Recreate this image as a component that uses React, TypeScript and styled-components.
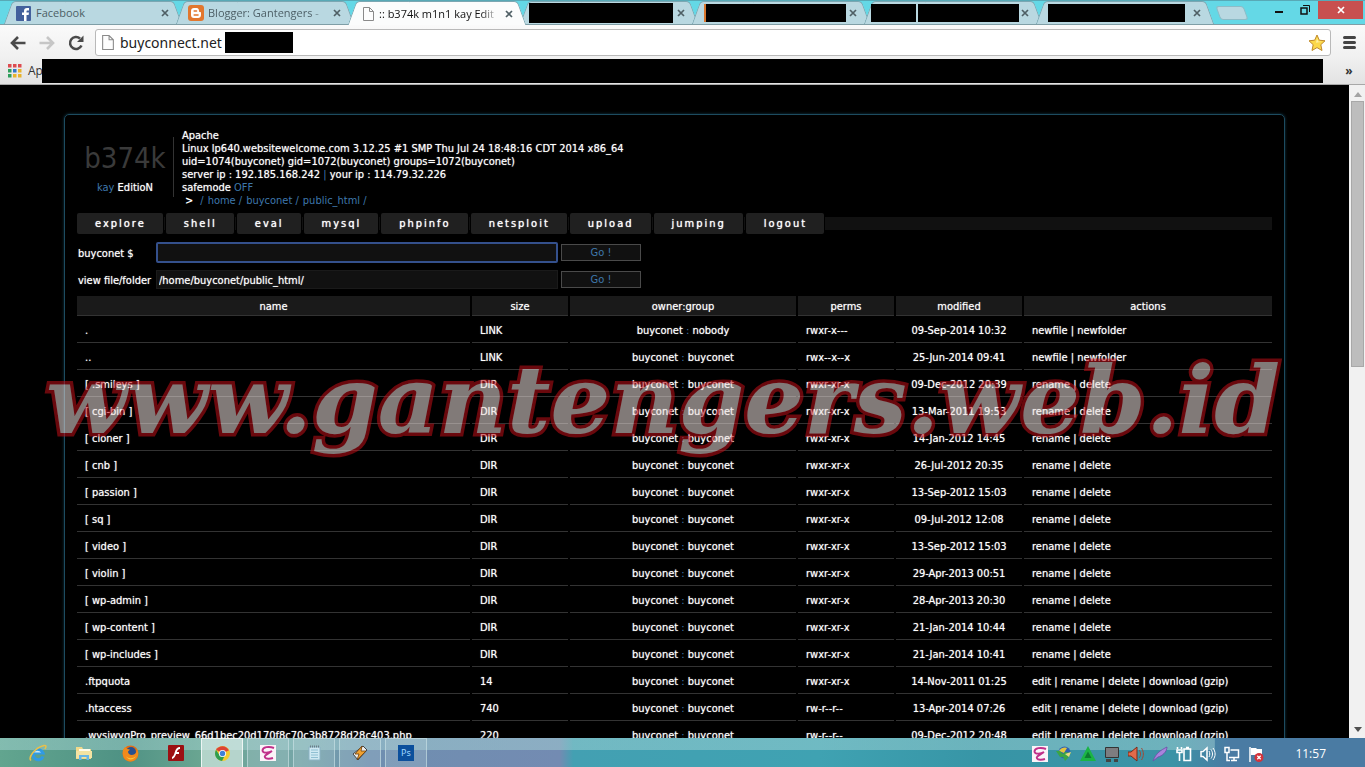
import React from "react";
import styled, { createGlobalStyle, css } from "styled-components";

const tahoma = `"DejaVu Sans Condensed", "Noto Sans", sans-serif`;
const segoe = `"Open Sans", "Noto Sans", sans-serif`;
const accent = "#3f78ac";

const GlobalStyle = createGlobalStyle`
  * { box-sizing: border-box; }
  body { margin: 0; background: #000; }
  a { color: inherit; text-decoration: none; }
  button { font: inherit; cursor: pointer; }
`;

const Screen = styled.div`
  display: flex;
  flex-direction: column;
  height: 100vh;
  overflow: hidden;
`;

/* ---------- browser chrome ---------- */

const TabStrip = styled.header`
  display: flex;
  flex: none;
  height: 25px;
  background: #64d8e6;
  border-top: 1px solid #58a9b6;
  border-bottom: 1px solid #7f9ea6;
  font: 11px/16px ${segoe};
`;

const Tab = styled.div<{ $active?: boolean; $indent?: number; $gap?: number }>`
  position: relative;
  display: flex;
  align-items: center;
  flex: 0 0 172px;
  min-width: 0;
  height: ${(p) => (p.$active ? 24 : 23)}px;
  padding: 1px 3px 0 ${(p) => p.$indent ?? 16}px;
  gap: ${(p) => p.$gap ?? 5}px;
  z-index: ${(p) => (p.$active ? 2 : 1)};
  color: ${(p) => (p.$active ? "#111" : "#4d5f66")};

  &::before,
  &::after {
    content: "";
    position: absolute;
    z-index: -1;
    top: 0;
    bottom: 0;
    background: ${(p) => (p.$active ? "#fbfcfc" : "#b9d8e1")};
    border: 0 solid #7ba7b2;
    border-top-width: 1px;
  }
  &::before {
    left: 8px;
    right: 50%;
    border-left-width: 1px;
    border-top-left-radius: 4px;
    transform: skewX(-20deg);
  }
  &::after {
    left: 40%;
    right: -6px;
    border-right-width: 1px;
    border-top-right-radius: 4px;
    transform: skewX(20deg);
  }
`;

const TabTitle = styled.span<{ $fade?: boolean }>`
  overflow: hidden;
  white-space: nowrap;
  flex: 0 1 120px;
  ${(p) =>
    p.$fade &&
    css`
      mask-image: linear-gradient(to right, #000 85%, transparent);
    `}
`;

const TabClose = styled.button`
  display: flex;
  flex: none;
  margin-left: auto;
  padding: 0;
  border: 0;
  background: none;
  color: #4f5f65;
`;

const Redaction = styled.span<{ $w: number; $h?: number; $edge?: string }>`
  flex: 0 0 ${(p) => p.$w}px;
  height: ${(p) => p.$h ?? 18}px;
  background: #000;
  ${(p) => p.$edge && `border-left: 2px solid ${p.$edge};`}
`;

const NewTab = styled.button`
  width: 28px;
  height: 14px;
  margin: 5px 0 0 14px;
  padding: 0;
  border: 1px solid #8dbcc7;
  border-radius: 3px;
  background: #b9d8e1;
  transform: skewX(20deg);
`;

const WindowControls = styled.div`
  display: flex;
  margin-left: auto;
  margin-right: 2px;
`;

const WindowButton = styled.button<{ $close?: boolean }>`
  display: flex;
  align-items: center;
  justify-content: center;
  width: ${(p) => (p.$close ? 45 : 26)}px;
  height: 18px;
  padding: 0;
  border: 0;
  color: ${(p) => (p.$close ? "#fff" : "#111")};
  background: ${(p) => (p.$close ? "#c8504f" : "transparent")};
`;

const Toolbar = styled.div`
  display: flex;
  align-items: center;
  flex: none;
  height: 33px;
  padding: 2px 9px 0 8px;
  background: linear-gradient(#fafafa, #f0f0f0);
`;

const ToolButton = styled.button`
  display: flex;
  justify-content: center;
  flex: 0 0 20px;
  margin-right: 9px;
  padding: 0;
  border: 0;
  background: none;
`;

const Omnibox = styled.div`
  display: flex;
  align-items: center;
  flex: 1;
  height: 27px;
  margin-right: 12px;
  padding: 0 4px 0 6px;
  border: 1px solid #b9b9b9;
  border-radius: 3px;
  background: #fff;
`;

const AddressInput = styled.input`
  width: 105px;
  margin-left: 6px;
  padding: 0;
  border: 0;
  outline: 0;
  background: none;
  color: #222;
  font: 14px/22px "Noto Sans", sans-serif;
`;

const PlainButton = styled.button`
  display: flex;
  margin-left: auto;
  padding: 0;
  border: 0;
  background: none;
`;

const BookmarksBar = styled.div`
  display: flex;
  align-items: center;
  flex: none;
  height: 27px;
  padding: 0 12px 0 8px;
  border-bottom: 1px solid #a8a8a8;
  background: linear-gradient(#f0f0f0, #e3e3e3);
  color: #333;
  font: 12px/16px ${segoe};
`;

const AppsLink = styled.a`
  display: flex;
  align-items: center;
  gap: 6px;
  width: 34px;
  overflow: hidden;

  svg {
    flex: none;
  }
`;

const HiddenBookmarks = styled.div`
  flex: 1;
  height: 24px;
  margin-right: 22px;
  background: #000;
`;

const Overflow = styled.button`
  width: 8px;
  padding: 0;
  border: 0;
  background: none;
  color: #333;
  font-weight: bold;
`;

/* ---------- page ---------- */

const Viewport = styled.div`
  position: relative;
  display: flex;
  flex: 1;
  min-height: 0;
  overflow: hidden;
  background: #000;
`;

const Page = styled.main`
  flex: 1;
  min-width: 0;
  padding: 29px 64px 0;
  color: #fff;
  font: 11px/13px ${tahoma};
  text-shadow: 0 0 1px rgba(255, 255, 255, 0.7);
`;

const Panel = styled.section`
  padding: 14px 12px 30px;
  border: 1px solid #1d4c60;
  border-radius: 5px;
  box-shadow: 0 0 3px #12394a;
`;

const Head = styled.div`
  display: flex;
  margin-bottom: 6px;
`;

const Brand = styled.div`
  width: 97px;
  height: 60px;
  margin-top: 8px;
  padding-top: 2px;
  border-right: 1px solid #333;
  text-align: center;
`;

const BrandName = styled.h1`
  margin: 0 0 4px;
  color: #3a3a3a;
  font: 29px/38px ${tahoma};
  text-shadow: none;
`;

const Accent = styled.span`
  color: ${accent};
  text-shadow: none;
`;

const Info = styled.div`
  padding-left: 8px;
`;

const Crumbs = styled.nav`
  display: flex;
  gap: 4px;
  padding-left: 3px;
  color: ${accent};
  text-shadow: none;
`;

const Prompt = styled.b`
  margin-right: 3px;
  color: #fff;
`;

const Menu = styled.nav`
  display: flex;
  gap: 3px;
  height: 21px;
  background: linear-gradient(#111, #111) 0 4px / 100% 13px no-repeat;
`;

const MenuItem = styled.a`
  padding: 0 17px 0 18px;
  background: #202020;
  border-radius: 2px;
  box-shadow: 0 0 0 1px #000;
  line-height: 22px;
  letter-spacing: 2px;
  text-shadow: 0 0 1px #fff;
`;

const CommandForm = styled.form`
  display: flex;
  align-items: center;
  height: 21px;
  margin-top: 8px;
  & + & {
    margin-top: 6px;
  }
`;

const CommandLabel = styled.label`
  flex: 0 0 79px;
  padding: 1px 0 0 1px;
`;

const CommandInput = styled.input<{ $focused?: boolean }>`
  flex: 0 0 402px;
  height: ${(p) => (p.$focused ? 21 : 19)}px;
  margin-right: 3px;
  padding: 1px 2px 0;
  border: ${(p) => (p.$focused ? "2px solid #34508c" : "1px solid #1a1a1a")};
  border-radius: ${(p) => (p.$focused ? 2 : 0)}px;
  outline: 0;
  background: #111;
  color: #fff;
  font: inherit;
  text-shadow: inherit;
`;

const GoButton = styled.button`
  width: 80px;
  height: 17px;
  padding: 0;
  border: 1px solid #4a4a4a;
  background: #111;
  color: ${accent};
  line-height: 15px;
`;

const TableFrame = styled.div`
  margin: 5px -2px 0;
`;

const Files = styled.table`
  width: 100%;
  border-spacing: 2px 1px;
  table-layout: fixed;
`;

const Col = styled.col<{ $w?: number }>`
  ${(p) => p.$w && `width: ${p.$w}px;`}
`;

const HeadCell = styled.th`
  height: 20px;
  padding: 1px 0 0;
  border-bottom: 1px solid #333;
  background: #1a1a1a;
  font-weight: normal;
`;

const Cell = styled.td<{ $center?: boolean }>`
  height: 26px;
  padding: 2px 8px 0;
  border-bottom: 1px solid #333;
  text-align: ${(p) => (p.$center ? "center" : "left")};
  white-space: nowrap;
`;

const Watermark = styled.div`
  position: absolute;
  top: 255px;
  left: 46px;
  color: #ebdedb;
  font: italic bold 94px/120px "DejaVu Serif", serif;
  white-space: nowrap;
  -webkit-text-stroke: 7px #c01018;
  paint-order: stroke fill;
  text-shadow: 0 0 3px #d01020;
  opacity: 0.55;
  pointer-events: none;
`;

const Scrollbar = styled.div`
  display: flex;
  flex-direction: column;
  align-items: center;
  flex: 0 0 16px;
  padding: 7px 0 6px 1px;
  background: #f1f1f1;
`;

const Thumb = styled.div`
  width: 13px;
  height: 266px;
  margin-top: 4px;
  border: 1px solid #a8a8a8;
  background: #bdbdbd;
`;

const Arrow = styled.span<{ $down?: boolean }>`
  border: 4px solid transparent;
  ${(p) =>
    p.$down
      ? css`
          margin-top: auto;
          border-top: 5px solid #505050;
          border-bottom-width: 0;
        `
      : css`
          border-bottom: 5px solid #a3a3a3;
          border-top-width: 0;
        `}
`;

/* ---------- taskbar ---------- */

const Taskbar = styled.footer`
  display: flex;
  align-items: stretch;
  flex: none;
  height: 29px;
  padding-left: 17px;
  background:
    linear-gradient(rgba(170, 215, 215, 0.45), rgba(170, 215, 215, 0.45)) 0 0 / 89% 12px no-repeat,
    linear-gradient(
      to right,
      #62a58f 0,
      #4f9284 9%,
      #6ba692 15%,
      #76a6a8 22%,
      #6f8fb0 27%,
      #738bb2 41%,
      #43a0b2 42%,
      #3fa2b2 60%,
      #3795a6 72%,
      #3c93a6 86%,
      #4a7ba3 90%,
      #4a7ba3 100%
    );
`;

const TaskButton = styled.button<{ $state?: "open" | "active" }>`
  display: flex;
  align-items: center;
  justify-content: center;
  flex: 0 0 42px;
  margin-right: 4px;
  padding: 0;
  border: 1px solid transparent;
  border-bottom: 0;
  background: none;
  ${(p) =>
    p.$state === "open" &&
    css`
      border-color: rgba(205, 228, 232, 0.6);
      background: rgba(190, 215, 220, 0.22);
    `}
  ${(p) =>
    p.$state === "active" &&
    css`
      border-color: #eef6f4;
      background: rgba(225, 240, 235, 0.62);
    `}
`;

const Tray = styled.div`
  display: flex;
  align-items: center;
  gap: 8px;
  margin-left: auto;
  padding-top: 2px;
`;

const Clock = styled.time`
  padding: 0 39px 0 23px;
  color: #fff;
  font: 12px/16px ${segoe};
`;

/* ---------- icons ---------- */

const CloseIcon = ({ width = 1.7 }: { width?: number }) => (
  <svg width="8" height="8" viewBox="0 0 8 8" stroke="currentColor" strokeWidth={width} fill="none">
    <path d="M1 1 7 7M7 1 1 7" />
  </svg>
);

const FacebookIcon = () => (
  <svg width="15" height="15" viewBox="0 0 15 15">
    <rect width="15" height="15" rx="1" fill="#43609c" />
    <path d="M8 15V9H6V6.500h2V5c0-2 1-3 3-3h2v2.500h-1.500c-.7 0-1 .3-1 1v1H13L12.600 9h-2.100v6z" fill="#fff" />
  </svg>
);

const BloggerIcon = () => (
  <svg width="16" height="16" viewBox="0 0 16 16">
    <rect width="16" height="16" rx="3" fill="#e2772e" />
    <path d="M6 3h2.500C10.500 3 11 4.500 11 6c0 .8.300 1 1 1s1 .3 1 1v2c0 2-1.300 3-3 3H6c-2 0-3-1.200-3-3V6c0-2 1.200-3 3-3z" fill="#fff" />
    <path d="M6.200 6h2.300M6.200 10h3.800" stroke="#e2772e" strokeWidth="1.600" strokeLinecap="round" />
  </svg>
);

const PageIcon = ({ h = 14 }: { h?: number }) => (
  <svg width={h - 3} height={h} viewBox="0 0 11 14" fill="#fdfdfd" stroke="#8a8a8a">
    <path d="M.5.500h6L10.500 4.500v9H.500zM6.500.500v4h4" />
  </svg>
);

const BackIcon = ({ color }: { color: string }) => (
  <svg width="16" height="14" viewBox="0 0 16 14" stroke={color} strokeWidth="2.600" fill="none">
    <path d="M2 7h13.500M8 1 2 7l6 6" />
  </svg>
);

const ForwardIcon = ({ color }: { color: string }) => (
  <svg width="16" height="14" viewBox="0 0 16 14" stroke={color} strokeWidth="2.600" fill="none">
    <path d="M14 7H.500M8 1l6 6-6 6" />
  </svg>
);

const ReloadIcon = () => (
  <svg width="16" height="16" viewBox="0 0 16 16">
    <path d="M13.500 10.500A6 6 0 1 1 12 3.500" stroke="#4a4a4a" strokeWidth="2.500" fill="none" />
    <path d="M15.500.500v6.500H9z" fill="#4a4a4a" />
  </svg>
);

const StarIcon = () => (
  <svg width="18" height="18" viewBox="0 0 18 18">
    <path d="m9 1 2.300 5.200 5.700.6-4.200 3.900 1.200 5.800L9 13.600 4 16.500l1.200-5.800L1 6.800l5.700-.6z" fill="#fbd84b" stroke="#c08a2a" strokeLinejoin="round" />
    <path d="m9 4 1.300 3.400 3.700.4-6 1z" fill="#fff0a0" />
  </svg>
);

const MenuIcon = () => (
  <svg width="13" height="13" viewBox="0 0 13 13" stroke="#444" strokeWidth="3" strokeLinecap="round">
    <path d="M1.500 1.500h10M1.500 6.500h10M1.500 11.500h10" />
  </svg>
);

const appColours = ["#dd4b50", "#dd4b50", "#dd4b50", "#2e9e5b", "#3277c8", "#e8b32c", "#2e9e5b", "#e8b32c", "#e8b32c"];
const AppsIcon = () => (
  <svg width="14" height="14" viewBox="0 0 14 14">
    {appColours.map((c, i) => (
      <rect key={i} x={(i % 3) * 5} y={Math.floor(i / 3) * 5} width="3.5" height="3.5" fill={c} />
    ))}
  </svg>
);

const ExplorerIcon = () => (
  <svg width="18" height="18" viewBox="0 0 18 18" fill="none">
    <path d="M14 12.500A5 5 0 1 1 14 9H5" stroke="#2f9be6" strokeWidth="3" />
    <path d="M5 8.500a4 3.500 0 0 1 7 0z" fill="#cfeaf8" />
    <path d="M2 16.500C-1 14 5 4 15 1.500c3-.6 2 2 .8 3.500" stroke="#e9c04a" strokeWidth="1.500" />
  </svg>
);
const FolderIcon = () => (
  <svg width="18" height="16" viewBox="0 0 18 16">
    <path d="M1 2h6l1 2h8v10H1z" fill="#f1d98a" />
    <path d="M4 4h11v4H4z" fill="#fffbe8" />
    <path d="M1 6h16v7H1z" fill="#f4e3a2" />
    <path d="M4 15v-5h10v5h-2.500v-3h-5v3z" fill="#68b7e6" />
  </svg>
);
const FirefoxIcon = () => (
  <svg width="17" height="17" viewBox="0 0 17 17">
    <circle cx="8.500" cy="8.500" r="8" fill="#e06d16" />
    <circle cx="9" cy="7" r="5" fill="#28508f" />
    <path d="M1 5c1-2 2-3 3-3l1 2 3 .500-2 2c0 3 3 4 6 3 2-1 3-3 2.500-6C18 8 16 16 8.500 16.500 2 16 0 11 1 5z" fill="#f08a1c" />
    <path d="M4 11c2 3 7 3 10 0-2 4-8 5-10 0z" fill="#f9c93a" />
  </svg>
);
const FlashIcon = () => (
  <svg width="16" height="16" viewBox="0 0 16 16">
    <rect width="16" height="16" rx="1" fill="#9c1012" />
    <path d="M12 3C8 3 8 7 7 9.500S5.500 13 4 13M7 8h4" stroke="#fff" strokeWidth="1.800" fill="none" />
  </svg>
);
const ChromeIcon = () => (
  <svg width="15" height="15" viewBox="0 0 16 16">
    <circle cx="8" cy="8" r="8" fill="#f3cb2f" />
    <path d="M8 8 1.100 4A8 8 0 0 1 14.900 4.500z" fill="#dc4335" />
    <path d="M1.100 4A8 8 0 0 0 7.500 16L11 9 5 10z" fill="#2f9d50" />
    <circle cx="8" cy="8" r="3.800" fill="#fff" />
    <circle cx="8" cy="8" r="2.900" fill="#3f80d8" />
  </svg>
);
const SwirlIcon = () => (
  <svg width="16" height="16" viewBox="0 0 16 16">
    <rect width="16" height="16" fill="#fbf3f8" />
    <path d="M14 3C9 1 2.500 2 2.500 5.500 2.500 8.500 9 8 12 6 8 9 3.500 10.500 5 12.500c1 1.500 5 1.500 8 .5" stroke="#c0308a" strokeWidth="1.900" fill="none" />
  </svg>
);
const NotepadIcon = () => (
  <svg width="13" height="16" viewBox="0 0 13 16">
    <path d="M1 2h11v13H1z" fill="#cfe9f3" stroke="#8bb3c4" />
    <path d="M3 5h7M3 7.500h7M3 10h7M3 12.500h7" stroke="#8fbfd2" />
    <path d="M2 1.500h10" stroke="#6b7d86" strokeWidth="2" strokeDasharray="1 1" />
  </svg>
);
const WinampIcon = () => (
  <svg width="16" height="16" viewBox="0 0 16 16">
    <path d="M1 9 11 1l4 4L6 15z" fill="#ececec" stroke="#444" strokeWidth="1" />
    <path d="M10 1 3 9h4l-2 6 9-9H9z" fill="#f0a030" stroke="#6b3f0c" strokeWidth=".8" />
  </svg>
);
const PhotoshopIcon = () => (
  <svg width="16" height="16" viewBox="0 0 16 16">
    <rect width="16" height="16" fill="#0b4f9c" />
    <text x="3" y="11" fill="#9fd6ff" fontFamily="Noto Sans, sans-serif" fontSize="9">Ps</text>
  </svg>
);
const GlobeArrowIcon = () => (
  <svg width="16" height="16" viewBox="0 0 16 16">
    <circle cx="8.500" cy="6.500" r="6" fill="#2f5fb0" />
    <path d="M3 5c2-4 7-4 8-3l-3 5z" fill="#e3c440" />
    <path d="M0 5h4l3 3 2-2 6 1-3 5-3 3-2-4H4z" fill="#3aa545" />
    <path d="m9 8 6-2-2 5z" fill="#e8dc86" />
  </svg>
);
const TriangleIcon = () => (
  <svg width="16" height="16" viewBox="0 0 16 16">
    <path d="M8 0 16 15H0z" fill="#1bb545" />
    <path d="M8 5.500 11.500 12h-7z" fill="#0c7c30" />
  </svg>
);
const DeviceIcon = () => (
  <svg width="16" height="16" viewBox="0 0 16 16">
    <path d="M1.500 1.500h13v10h-13z" fill="#7d7d80" stroke="#333" />
    <path d="M2 13h5v3H2zM10 13h4v3h-4z" fill="#444" />
  </svg>
);
const RedSpeakerIcon = () => (
  <svg width="16" height="16" viewBox="0 0 16 16">
    <path d="M0 6h3l6-5v14l-6-5H0z" fill="#e36a4a" stroke="#7c2a18" />
    <path d="M11 4c2 2 2 6 0 8M13.500 2c2.500 4 2.500 8 0 12" stroke="#a04a38" fill="none" />
  </svg>
);
const FeatherIcon = () => (
  <svg width="16" height="16" viewBox="0 0 16 16">
    <path d="M1 15C4 7 9 4 15 1c0 5-5 9-9 10z" fill="#a884dc" stroke="#6c4ca6" strokeWidth=".8" />
  </svg>
);
const BatteryIcon = () => (
  <svg width="16" height="16" viewBox="0 0 16 16" fill="none" stroke="#fff" strokeWidth="1.600">
    <path d="M8 3h6.500v11.500H8zM10 1.500h3M3.500 6v9M1.500 1v2M5.500 1v2M1 4h5v2.500H1z" />
  </svg>
);
const SpeakerIcon = () => (
  <svg width="16" height="16" viewBox="0 0 16 16">
    <path d="M1 5.500h2l4-3.500v12l-4-3.500H1z" fill="none" stroke="#fff" strokeWidth="1.500" />
    <path d="M9 5c1 2 1 4 0 6M11 3.500c2 3 2 6 0 9M13 2c2.800 4 2.800 8 0 12" stroke="#fff" fill="none" />
  </svg>
);
const NetworkIcon = () => (
  <svg width="16" height="16" viewBox="0 0 16 16" fill="none" stroke="#fff" strokeWidth="1.500">
    <path d="M6.500 4h8v7.500H5M7 14.500h6M10 11.500v3M3 7v7.500h3M1 1.500h4v5H1z" />
  </svg>
);
const FlagIcon = () => (
  <svg width="16" height="16" viewBox="0 0 16 16">
    <path d="M2 1v15" stroke="#fff" strokeWidth="1.500" />
    <path d="M3 2h5l1 1h5v6H3z" fill="#fff" />
    <circle cx="11" cy="11.500" r="4.500" fill="#d3333c" />
    <path d="m9.300 9.800 3.400 3.400m0-3.400-3.400 3.400" stroke="#fff" strokeWidth="1.300" />
  </svg>
);

/* ---------- data ---------- */

const menu = ["explore", "shell", "eval", "mysql", "phpinfo", "netsploit", "upload", "jumping", "logout"];

type Row = { name: string; size: string; group?: string; perms: string; modified: string };

const rows: Row[] = [
  { name: ".", size: "LINK", group: "nobody", perms: "rwxr-x---", modified: "09-Sep-2014 10:32" },
  { name: "..", size: "LINK", perms: "rwx--x--x", modified: "25-Jun-2014 09:41" },
  { name: "[ .smileys ]", size: "DIR", perms: "rwxr-xr-x", modified: "09-Dec-2012 20:39" },
  { name: "[ cgi-bin ]", size: "DIR", perms: "rwxr-xr-x", modified: "13-Mar-2011 19:53" },
  { name: "[ cloner ]", size: "DIR", perms: "rwxr-xr-x", modified: "14-Jan-2012 14:45" },
  { name: "[ cnb ]", size: "DIR", perms: "rwxr-xr-x", modified: "26-Jul-2012 20:35" },
  { name: "[ passion ]", size: "DIR", perms: "rwxr-xr-x", modified: "13-Sep-2012 15:03" },
  { name: "[ sq ]", size: "DIR", perms: "rwxr-xr-x", modified: "09-Jul-2012 12:08" },
  { name: "[ video ]", size: "DIR", perms: "rwxr-xr-x", modified: "13-Sep-2012 15:03" },
  { name: "[ violin ]", size: "DIR", perms: "rwxr-xr-x", modified: "29-Apr-2013 00:51" },
  { name: "[ wp-admin ]", size: "DIR", perms: "rwxr-xr-x", modified: "28-Apr-2013 20:30" },
  { name: "[ wp-content ]", size: "DIR", perms: "rwxr-xr-x", modified: "21-Jan-2014 10:44" },
  { name: "[ wp-includes ]", size: "DIR", perms: "rwxr-xr-x", modified: "21-Jan-2014 10:41" },
  { name: ".ftpquota", size: "14", perms: "rwxr-xr-x", modified: "14-Nov-2011 01:25" },
  { name: ".htaccess", size: "740", perms: "rw-r--r--", modified: "13-Apr-2014 07:26" },
  { name: ".wysiwygPro_preview_66d1bec20d170f8c70c3b8728d28c403.php", size: "220", perms: "rw-r--r--", modified: "09-Dec-2012 20:48" },
];

const actionsFor = (size: string) => {
  if (size === "LINK") return ["newfile", "newfolder"];
  if (size === "DIR") return ["rename", "delete"];
  return ["edit", "rename", "delete", "download"];
};

const Close = () => (
  <TabClose aria-label="Close tab">
    <CloseIcon />
  </TabClose>
);

const Actions = ({ size }: { size: string }) => (
  <>
    {actionsFor(size).map((a, i) => (
      <React.Fragment key={a}>
        {i > 0 && " | "}
        <a href="#">{a}</a>
        {a === "download" && (
          <>
            {" ("}
            <a href="#">gzip</a>)
          </>
        )}
      </React.Fragment>
    ))}
  </>
);

export default function App() {
  return (
    <Screen>
      <GlobalStyle />
      <TabStrip>
        <Tab>
          <FacebookIcon />
          <TabTitle>Facebook</TabTitle>
          <Close />
        </Tab>
        <Tab $gap={4}>
          <BloggerIcon />
          <TabTitle $fade>Blogger: Gantengers - </TabTitle>
          <Close />
        </Tab>
        <Tab $active $indent={19}>
          <PageIcon />
          <TabTitle $fade>:: b374k m1n1 kay Edit</TabTitle>
          <Close />
        </Tab>
        <Tab $indent={13} $gap={2}>
          <Redaction $w={144} $h={20} />
          <Close />
        </Tab>
        <Tab $indent={16} $gap={2}>
          <Redaction $w={142} $edge="#d9772e" />
          <Close />
        </Tab>
        <Tab $indent={11} $gap={2}>
          <Redaction $w={45} />
          <Redaction $w={101} />
          <Close />
        </Tab>
        <Tab $indent={16} $gap={2}>
          <Redaction $w={137} />
          <Close />
        </Tab>
        <NewTab aria-label="New tab" />
        <WindowControls>
          <WindowButton aria-label="Minimize">
            <svg width="8" height="8">
              <path d="M0 6h8" stroke="currentColor" strokeWidth="2" />
            </svg>
          </WindowButton>
          <WindowButton aria-label="Restore">
            <svg width="10" height="10" fill="none" stroke="currentColor">
              <path d="M1 3h6v6H1z" strokeWidth="1.500" />
              <path d="M3 .500h6.500V7" />
            </svg>
          </WindowButton>
          <WindowButton $close aria-label="Close">
            <CloseIcon />
          </WindowButton>
        </WindowControls>
      </TabStrip>
      <Toolbar>
        <ToolButton aria-label="Back">
          <BackIcon color="#4a4a4a" />
        </ToolButton>
        <ToolButton aria-label="Forward">
          <ForwardIcon color="#c6c6c6" />
        </ToolButton>
        <ToolButton aria-label="Reload">
          <ReloadIcon />
        </ToolButton>
        <Omnibox>
          <PageIcon h={15} />
          <AddressInput aria-label="Address" defaultValue="buyconnect.net" />
          <Redaction $w={68} $h={21} />
          <PlainButton aria-label="Bookmark this page">
            <StarIcon />
          </PlainButton>
        </Omnibox>
        <PlainButton aria-label="Menu">
          <MenuIcon />
        </PlainButton>
      </Toolbar>
      <BookmarksBar>
        <AppsLink href="#">
          <AppsIcon />
          Apps
        </AppsLink>
        <HiddenBookmarks />
        <Overflow aria-label="More bookmarks">»</Overflow>
      </BookmarksBar>

      <Viewport>
        <Page>
          <Panel>
            <Head>
              <Brand>
                <BrandName>b374k</BrandName>
                <Accent>kay</Accent> EditioN
              </Brand>
              <Info>
                <div>Apache</div>
                <div>Linux lp640.websitewelcome.com 3.12.25 #1 SMP Thu Jul 24 18:48:16 CDT 2014 x86_64</div>
                <div>uid=1074(buyconet) gid=1072(buyconet) groups=1072(buyconet)</div>
                <div>
                  server ip : 192.185.168.242 <Accent>|</Accent> your ip : 114.79.32.226
                </div>
                <div>
                  safemode <Accent>OFF</Accent>
                </div>
                <Crumbs>
                  <Prompt>&gt;</Prompt>
                  <a href="#">/</a>
                  <a href="#">home /</a>
                  <a href="#">buyconet /</a>
                  <a href="#">public_html /</a>
                </Crumbs>
              </Info>
            </Head>
            <Menu>
              {menu.map((m) => (
                <MenuItem key={m} href="#">
                  {m}
                </MenuItem>
              ))}
            </Menu>
            <CommandForm>
              <CommandLabel htmlFor="cmd">buyconet $</CommandLabel>
              <CommandInput id="cmd" $focused />
              <GoButton type="button">Go !</GoButton>
            </CommandForm>
            <CommandForm>
              <CommandLabel htmlFor="view">view file/folder</CommandLabel>
              <CommandInput id="view" defaultValue="/home/buyconet/public_html/" />
              <GoButton type="button">Go !</GoButton>
            </CommandForm>
            <TableFrame>
              <Files>
                <colgroup>
                  <Col />
                  <Col $w={96} />
                  <Col $w={226} />
                  <Col $w={96} />
                  <Col $w={126} />
                  <Col $w={248} />
                </colgroup>
                <thead>
                  <tr>
                    {["name", "size", "owner:group", "perms", "modified", "actions"].map((h) => (
                      <HeadCell key={h}>{h}</HeadCell>
                    ))}
                  </tr>
                </thead>
                <tbody>
                  {rows.map((r) => (
                    <tr key={r.name}>
                      <Cell>
                        <a href="#">{r.name}</a>
                      </Cell>
                      <Cell>{r.size}</Cell>
                      <Cell $center>
                        buyconet <Accent>:</Accent> {r.group ?? "buyconet"}
                      </Cell>
                      <Cell>{r.perms}</Cell>
                      <Cell $center>{r.modified}</Cell>
                      <Cell>
                        <Actions size={r.size} />
                      </Cell>
                    </tr>
                  ))}
                </tbody>
              </Files>
            </TableFrame>
          </Panel>
        </Page>
        <Scrollbar>
          <Arrow />
          <Thumb />
          <Arrow $down />
        </Scrollbar>
        <Watermark>www.gantengers.web.id</Watermark>
      </Viewport>

      <Taskbar>
        <TaskButton aria-label="Internet Explorer"><ExplorerIcon /></TaskButton>
        <TaskButton aria-label="File Explorer"><FolderIcon /></TaskButton>
        <TaskButton aria-label="Firefox"><FirefoxIcon /></TaskButton>
        <TaskButton aria-label="Flash"><FlashIcon /></TaskButton>
        <TaskButton aria-label="Chrome" $state="active"><ChromeIcon /></TaskButton>
        <TaskButton aria-label="Smadav" $state="open"><SwirlIcon /></TaskButton>
        <TaskButton aria-label="Notepad" $state="open"><NotepadIcon /></TaskButton>
        <TaskButton aria-label="Winamp" $state="open"><WinampIcon /></TaskButton>
        <TaskButton aria-label="Photoshop" $state="open"><PhotoshopIcon /></TaskButton>
        <Tray>
          <SwirlIcon />
          <GlobeArrowIcon />
          <TriangleIcon />
          <DeviceIcon />
          <RedSpeakerIcon />
          <FeatherIcon />
          <BatteryIcon />
          <SpeakerIcon />
          <NetworkIcon />
          <FlagIcon />
          <Clock>11:57</Clock>
        </Tray>
      </Taskbar>
    </Screen>
  );
}
